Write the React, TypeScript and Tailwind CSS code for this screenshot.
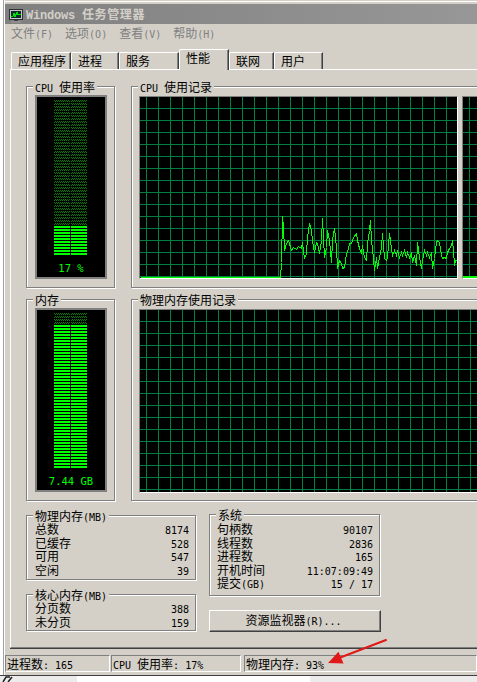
import React from 'react';

const CJK_RE = /[\u2E80-\u9FFF\uF900-\uFAFF\uFF00-\uFFEF]/;
const CJK_SPLIT = /([\u2E80-\u9FFF\uF900-\uFAFF\uFF00-\uFFEF]+)/;

function T({ s }: { s: string }) {
  const parts = s.split(CJK_SPLIT).filter((p) => p !== '');
  return (
    <>
      {parts.map((p, i) =>
        CJK_RE.test(p) ? (
          <span key={i} className="font-['Noto_Sans_CJK_SC',sans-serif] text-[12px]">
            {p}
          </span>
        ) : (
          <span key={i} className="font-['DejaVu_Sans_Mono',monospace] text-[10px]">
            {p}
          </span>
        )
      )}
    </>
  );
}

function GroupBox({
  label,
  className,
  children,
}: {
  label: string;
  className: string;
  children?: React.ReactNode;
}) {
  return (
    <div
      className={`relative shrink-0 border border-[#808080] shadow-[inset_1px_1px_0_#fff,1px_1px_0_#fff] ${className}`}
    >
      <div className="absolute left-[6px] top-[-7px] h-[13px] px-[2px] bg-[#d4d0c8] leading-[13px] whitespace-pre">
        <T s={label} />
      </div>
      {children}
    </div>
  );
}

function Meter({ lit, id, text }: { lit: number; id: string; text: string }) {
  const bars = Array.from({ length: 52 }, (_, i) => i);
  return (
    <div className="w-[72px] h-[184px] bg-black border-2 border-[#808080] flex flex-col">
      <svg width="33" height="156" className="block ml-[17px] mt-[3px]" shapeRendering="crispEdges">
        <defs>
          <pattern id={id} width="2" height="2" patternUnits="userSpaceOnUse">
            <rect x="0" y="0" width="1" height="1" fill="#008000" />
            <rect x="1" y="1" width="1" height="1" fill="#008000" />
          </pattern>
        </defs>
        {bars.map((i) => {
          const on = i >= 52 - lit;
          const fill = on ? '#00ff00' : `url(#${id})`;
          return (
            <g key={i}>
              <rect x="0" y={i * 3} width="16" height="2" fill={fill} />
              <rect x="17" y={i * 3} width="16" height="2" fill={fill} />
            </g>
          );
        })}
      </svg>
      <div className="mt-[6px] h-[12px] text-center leading-[12px] text-[#00ff00] font-['DejaVu_Sans_Mono',monospace] text-[10.5px] whitespace-pre">
        {text}
      </div>
    </div>
  );
}

function Grid({
  id,
  className,
  children,
}: {
  id: string;
  className: string;
  children?: React.ReactNode;
}) {
  return (
    <div
      className={`shrink-0 bg-black border border-t-[#808080] border-l-[#808080] border-b-white border-r-white ${className}`}
    >
      <svg width="100%" height="100%" className="block" shapeRendering="crispEdges">
        <defs>
          <pattern id={id} x="6" y="11" width="12" height="12" patternUnits="userSpaceOnUse">
            <rect x="0" y="0" width="1" height="12" fill="#008040" />
            <rect x="0" y="0" width="12" height="1" fill="#008040" />
          </pattern>
        </defs>
        <rect x="0" y="0" width="100%" height="100%" fill={`url(#${id})`} />
        {children}
      </svg>
    </div>
  );
}

const CPU_ABS: [number, number][] = [
  [140, 277], [280, 277], [280.7, 261.7], [282.3, 216], [283.3, 226.7], [284.3, 250], [286, 243],
  [288.3, 240], [291, 250], [293.3, 246.7], [295.7, 249.3], [298.3, 246], [300.7, 248], [302.3, 241.7],
  [304, 258], [305.7, 253], [307.3, 236.7], [309, 223], [310.7, 230], [312.3, 240], [314, 251.7],
  [315.7, 241.7], [317.3, 243.3], [319, 253.3], [320.7, 240], [322.3, 218.3], [324, 256.7], [325.7, 246.7],
  [327.3, 230], [329, 240], [330.7, 261.7], [332.3, 240], [334, 228.3], [335.7, 246.7], [337.3, 268.3],
  [339, 260], [340.7, 263.3], [342.3, 268.3], [344, 266.7], [345.7, 253.3], [347.3, 251.7], [349, 243.3],
  [350.7, 243.3], [353.3, 236.7], [355.7, 233.3], [357.3, 240], [359, 248.3], [360.7, 253.3], [362.3, 245],
  [364, 256.7], [365.7, 260], [367.3, 243.3], [369, 230], [370, 220], [371.3, 240], [372.7, 258.3],
  [374, 270], [375.7, 256.7], [377.3, 268.3], [379, 256.7], [380.7, 246.7], [382.3, 233.3], [384, 258.3],
  [385.7, 260], [387.3, 256.7], [389, 233.3], [390.7, 248.3], [392.3, 255], [394, 250], [395.7, 255],
  [397.3, 250], [399, 256.7], [400.7, 251.7], [402.3, 255], [404, 250], [405.7, 256.7], [407.3, 251.7],
  [409, 256.7], [410.7, 253.3], [412.3, 261.7], [414, 255], [415.7, 265], [417.3, 241.7], [419, 256.7],
  [420.7, 268.3], [422.3, 260], [424, 250], [425.7, 255], [427.3, 251.7], [429, 256.7], [430.7, 251.7],
  [432.3, 268.3], [434, 258.3], [435.7, 241.7], [437.3, 240], [439, 241.7], [440.7, 255], [442.3, 258.3],
  [444, 256.7], [445.7, 258.3], [447.3, 251.7], [449, 248.3], [450.7, 245], [452.3, 240], [453.3, 250],
  [454, 265], [455, 260], [456, 260],
];

const CPU_POINTS = CPU_ABS.map(([x, y]) => `${Math.round(x - 140) + 0.5},${Math.round(y - 97) + 0.5}`).join(' ');

function Row({ k, v }: { k: string; v: string }) {
  return (
    <div className="flex justify-between h-[13.5px] leading-[13.5px] whitespace-pre">
      <span className="inline-block h-[13.5px] overflow-visible">
        <T s={k} />
      </span>
      <span className="inline-block h-[13.5px] overflow-visible">
        <T s={v} />
      </span>
    </div>
  );
}

function Tab({ label, w, selected }: { label: string; w: string; selected?: boolean }) {
  return (
    <div
      className={`${w} ${
        selected ? 'h-[21px] -mb-px relative z-10 bg-[#d4d0c8]' : 'h-[17px]'
      } shrink-0 border-t border-l border-r border-white border-r-[#404040] shadow-[inset_-1px_0_0_#808080] rounded-tl-[2px] pl-[6px] pt-[2px] leading-[12px] whitespace-pre`}
    >
      <T s={label} />
    </div>
  );
}

function StatusField({ w, text }: { w: string; text: string }) {
  return (
    <div
      className={`${w} h-[17px] shrink-0 border border-t-[#808080] border-l-[#808080] border-b-white border-r-white pl-[1px] leading-[15px] whitespace-pre`}
    >
      <T s={text} />
    </div>
  );
}

export default function App() {
  return (
    <div className="relative w-[477px] h-[682px] overflow-hidden bg-white flex flex-col text-black text-[12px] font-['Noto_Sans_CJK_SC',sans-serif]">
      <div className="h-[675px] flex shrink-0">
        <div className="w-[3px] shrink-0 bg-white" />
        <div className="flex-1 min-w-0 flex flex-col bg-[#d4d0c8] border-l border-[#a0a0a0] shadow-[inset_1px_0_0_#fff] pl-[1px]">
          <div className="h-px bg-[#d4d0c8]" />
          <div className="h-px bg-white" />
          <div className="h-[2px]" />

          {/* Title bar */}
          <div className="h-[20px] shrink-0 flex items-start bg-linear-to-r from-[#808080] to-[#979797]">
            <svg width="15" height="14" viewBox="0 0 15 14" className="ml-[4px] mt-[5px] block" shapeRendering="crispEdges">
              <rect x="0.5" y="0.5" width="13" height="10" fill="#c8c8c8" stroke="#303030" />
              <rect x="2" y="2" width="10" height="7" fill="#0b2b2b" />
              <polyline points="2,7 4,7 5,4 6,8 8,3 9,6 10,5 12,6" fill="none" stroke="#00e000" strokeWidth="1" />
              <rect x="5" y="11" width="4" height="1" fill="#404040" />
              <rect x="2" y="12" width="10" height="2" fill="#909090" />
            </svg>
            <div className="ml-[2px] mt-[3px] leading-[13px] text-[#d4d0c8] font-bold whitespace-pre">
              <span className="font-['Liberation_Mono',monospace] text-[12px] tracking-[-0.2px]">Windows </span>
              <span className="font-['Noto_Sans_CJK_SC',sans-serif] text-[12px] tracking-[0.6px]">任务管理器</span>
            </div>
          </div>

          {/* Menu */}
          <div className="h-[20px] shrink-0 flex gap-[12px] pl-[6px] pt-[3px] leading-[12px] text-[#808080] whitespace-pre">
            <span><T s="文件(F)" /></span>
            <span><T s="选项(O)" /></span>
            <span><T s="查看(V)" /></span>
            <span><T s="帮助(H)" /></span>
          </div>

          {/* Tabs */}
          <div className="h-[25px] shrink-0 flex items-end pl-[6px]">
            <Tab label="应用程序" w="w-[60px]" />
            <Tab label="进程" w="w-[48px]" />
            <Tab label="服务" w="w-[60px]" />
            <Tab label="性能" w="w-[50px]" selected />
            <Tab label="联网" w="w-[45px]" />
            <Tab label="用户" w="w-[49px]" />
          </div>

          {/* Panel */}
          <div className="h-[579px] shrink-0 ml-[5px] border-t border-l border-white border-b border-b-[#808080] shadow-[0_1px_0_#404040] pl-[15px] pt-[16px] flex flex-col">
            {/* Row 1 */}
            <div className="flex gap-[16px] items-start">
              <GroupBox label="CPU 使用率" className="w-[89px] h-[202px] pl-[8px] pt-[8px]">
                <Meter lit={10} id="chk-cpu" text="17 %" />
              </GroupBox>
              <GroupBox label="CPU 使用记录" className="w-[360px] h-[202px] pl-[7px] pt-[9px] flex gap-[4px] items-start">
                <Grid id="grid-cpu1" className="w-[319px] h-[183px]">
                  <polyline points={CPU_POINTS} fill="none" stroke="#00ff00" strokeWidth="1" />
                </Grid>
                <Grid id="grid-cpu2" className="w-[80px] h-[183px]">
                  <rect x="0" y="179" width="100%" height="2" fill="#00ff00" />
                </Grid>
              </GroupBox>
            </div>

            {/* Row 2 */}
            <div className="flex gap-[16px] items-start mt-[11px]">
              <GroupBox label="内存" className="w-[89px] h-[202px] pl-[8px] pt-[8px]">
                <Meter lit={48} id="chk-mem" text="7.44 GB" />
              </GroupBox>
              <GroupBox label="物理内存使用记录" className="w-[360px] h-[202px] pl-[7px] pt-[9px]">
                <Grid id="grid-mem" className="w-[360px] h-[184px]" />
              </GroupBox>
            </div>

            {/* Row 3 */}
            <div className="flex gap-[13px] items-start mt-[13px]">
              <div className="w-[170px] shrink-0 mt-[1px] flex flex-col">
                <GroupBox label="物理内存(MB)" className="w-[170px] h-[65px] pt-[6px] pl-[8px] pr-[6px]">
                  <Row k="总数" v="8174" />
                  <Row k="已缓存" v="528" />
                  <Row k="可用" v="547" />
                  <Row k="空闲" v="39" />
                </GroupBox>
                <GroupBox label="核心内存(MB)" className="w-[170px] h-[37px] mt-[14px] pt-[6px] pl-[8px] pr-[6px]">
                  <Row k="分页数" v="388" />
                  <Row k="未分页" v="159" />
                </GroupBox>
              </div>
              <div className="w-[172px] shrink-0 flex flex-col">
                <GroupBox label="系统" className="w-[171px] h-[82px] pt-[7px] pl-[7px] pr-[6px]">
                  <Row k="句柄数" v="90107" />
                  <Row k="线程数" v="2836" />
                  <Row k="进程数" v="165" />
                  <Row k="开机时间" v="11:07:09:49" />
                  <Row k="提交(GB)" v="15 / 17" />
                </GroupBox>
                <div className="mt-[14px] w-[172px] h-[22px] flex items-center justify-center border border-t-white border-l-white border-b-[#404040] border-r-[#404040] shadow-[inset_-1px_-1px_0_#808080] leading-[12px] whitespace-pre">
                  <span className="ml-[-3px]"><T s="资源监视器(R)..." /></span>
                </div>
              </div>
            </div>
          </div>

          {/* Status bar */}
          <div className="h-[27px] shrink-0 pt-[7px] flex">
            <StatusField w="w-[105px]" text="进程数: 165" />
            <StatusField w="w-[130px] ml-[1px]" text="CPU 使用率: 17%" />
            <StatusField w="flex-1 ml-[3px]" text="物理内存: 93%" />
          </div>
        </div>
      </div>

      {/* Bottom edge */}
      <div className="h-px shrink-0 bg-[#404040]" />
      <div className="h-[6px] shrink-0 flex">
        <div className="w-[77px] shrink-0 bg-[#ececec] flex items-start">
          <svg width="12" height="6" viewBox="0 0 12 6" className="block ml-[2px]">
            <polyline points="1,6 4,1 8,1" fill="none" stroke="#202020" strokeWidth="1.5" />
            <polyline points="6,6 10,1" fill="none" stroke="#202020" strokeWidth="1.5" />
          </svg>
        </div>
        <div className="w-[233px] shrink-0 bg-white" />
        <div className="flex-1 bg-[#ececec]" />
      </div>

      {/* Red annotation arrow */}
      <svg
        width="75"
        height="40"
        viewBox="0 0 75 40"
        className="absolute left-[320px] top-[632px] block pointer-events-none"
      >
        <line x1="19" y1="26" x2="66" y2="8" stroke="#e01818" strokeWidth="2" strokeLinecap="round" />
        <polygon points="8,31 23.5,31.5 18.5,19.8" fill="#e01818" />
      </svg>
    </div>
  );
}
